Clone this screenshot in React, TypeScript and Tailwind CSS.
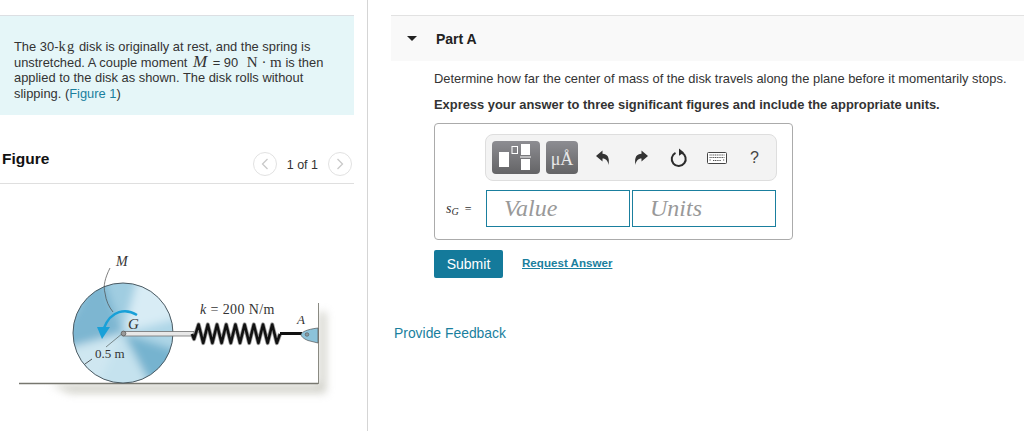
const sans = { fontFamily: '"Liberation Sans", Arial, sans-serif' };
const serif = { fontFamily: '"Liberation Serif", serif' };

function springPath() {
  // coil teeth between x=182 and x=270
  let d = "M182 94 L184 99";
  const n = 9;
  for (let i = 0; i < n; i++) {
    const x = 184 + i * 9.2;
    d += ` L${x + 4.6} 84.5 L${x + 9.2} 103`;
  }
  d += " L270 94";
  return d;
}

function DiskFigure() {
  const cx = 113;
  const cy = 93;
  const r = 50;
  // light and dark wedges of the brushed metal look
  const wedges: [number, number, string][] = [
    [-75, -15, "#d8ecf5"],
    [-15, 18, "#aed6e7"],
    [18, 62, "#76b3cf"],
    [62, 115, "#c5e2ee"],
    [115, 165, "#cfe7f1"],
    [165, 250, "#7db6d1"],
    [250, 285, "#a0cde1"],
  ];
  const pt = (a: number, l = 70) => {
    const t = (a * Math.PI) / 180;
    return `${cx + l * Math.cos(t)} ${cy + l * Math.sin(t)}`;
  };
  const spring = springPath();
  return (
    <svg width="344" height="170" viewBox="0 0 344 170" className="block ml-[10px]">
      <defs>
        <clipPath id="disk">
          <circle cx={cx} cy={cy} r={r} />
        </clipPath>
        <filter id="soft" x="-20%" y="-20%" width="140%" height="140%">
          <feGaussianBlur stdDeviation="4" />
        </filter>
        <filter id="shadow" x="-20%" y="-50%" width="140%" height="200%">
          <feGaussianBlur stdDeviation="4" />
        </filter>
      </defs>

      {/* shadow under the plane */}
      <path d="M40 144 L309 144 L309 72 L316 72 L316 153 L60 153 Z" fill="#a3a393" opacity="0.5" filter="url(#shadow)" />
      <rect x="9" y="63" width="299" height="80" fill="#fff" />

      {/* plane and wall */}
      <path d="M9 143.5 H308" fill="none" stroke="#77776f" strokeWidth="1.4" />
      <path d="M308.5 144 V63" fill="none" stroke="#8a8a82" strokeWidth="1" />

      {/* disk */}
      <g clipPath="url(#disk)">
        <rect x={cx - r} y={cy - r} width={r * 2} height={r * 2} fill="#a3cfe2" />
        <g filter="url(#soft)">
          {wedges.map(([a, b, c], i) => (
            <path key={i} d={`M${cx} ${cy} L${pt(a)} L${pt(b)} Z`} fill={c} />
          ))}
        </g>
      </g>
      <circle cx={cx} cy={cy} r={r} fill="none" stroke="#4c5a62" strokeWidth="1" />

      {/* moment leader and arrow */}
      <path d="M100 28 C95 38 93 46 95 53 C96 61 99 67 103 72" fill="none" stroke="#4a4a4a" strokeWidth="0.7" />
      <path d="M127 75 C116 68 101 70 94 88" fill="none" stroke="#18a0d8" strokeWidth="2.4" />
      <path d="M87 87 L100 87 L92 99 Z" fill="#18a0d8" />

      {/* radius lines */}
      <path d="M113 93 L96 107" stroke="#55605f" strokeWidth="0.7" />
      <path d="M82 119 L75 124" stroke="#333" strokeWidth="0.8" />

      {/* rod */}
      <rect x="113" y="91.5" width="71" height="4.5" fill="#e8e8e8" stroke="#707070" strokeWidth="0.8" />
      <circle cx="113.5" cy="93.5" r="2.4" fill="#999" stroke="#555" strokeWidth="0.7" />

      {/* spring */}
      <path d={spring} fill="none" stroke="#a0a0a0" strokeWidth="4.2" strokeLinejoin="round" />
      <path d={spring} fill="none" stroke="#111" strokeWidth="2.6" strokeLinejoin="round" />
      <rect x="270" y="92" width="22" height="3" fill="#111" />

      {/* pin at A */}
      <path d="M308 88 L308 103 L298 100.5 C293 98.5 291 96 291 94.5 C292 92 296 89.5 308 88 Z" fill="#8cc3da" stroke="#555" strokeWidth="0.7" />
      <circle cx="297" cy="94.5" r="1.8" fill="#8a9aa0" stroke="#555" strokeWidth="0.6" />

      <g style={serif} fill="#333">
        <text x="106" y="26" fontSize="14" fontStyle="italic">M</text>
        <text x="118" y="89" fontSize="15" fontStyle="italic">G</text>
        <text x="85" y="118" fontSize="13">0.5 m</text>
        <text x="190" y="74" fontSize="14" letterSpacing="0.4"><tspan fontStyle="italic">k</tspan> = 200 N/m</text>
        <text x="287" y="84" fontSize="13" fontStyle="italic">A</text>
      </g>
    </svg>
  );
}

function Toolbar() {
  return (
    <div className="flex items-center w-[292px] h-[47px] ml-[50px] mt-[10px] rounded-[8px] border border-[#dedede] bg-[#f3f3f3] pl-[6px]">
      <div className="w-[48px] h-[33px] rounded-[4px] bg-gradient-to-b from-[#8d8d92] to-[#646466]">
        <svg width="48" height="33" viewBox="0 0 48 33">
          <rect x="7" y="11" width="10" height="15" fill="#fff" />
          <rect x="20" y="5.5" width="5.5" height="7" fill="none" stroke="#fff" strokeWidth="1" />
          <rect x="29" y="3" width="9" height="11" fill="#fff" />
          <rect x="28" y="15.5" width="11" height="1" fill="#fff" />
          <rect x="29" y="18" width="9" height="11" fill="#fff" />
        </svg>
      </div>
      <div className="w-[32px] h-[33px] ml-[6px] rounded-[4px] bg-gradient-to-b from-[#8d8d92] to-[#646466] flex items-end justify-center pb-[6px] text-[#e8e8e8] text-[18px] leading-none" style={serif}>
        μÅ
      </div>
      <svg width="16" height="16" viewBox="0 0 16 16" className="ml-[17px]">
        <path d="M1 6 L7.5 0.5 L7.5 3.8 C12 3.8 15 7 13.5 15 C13 11 11 8.5 7.5 8.5 L7.5 11.5 Z" fill="#333" />
      </svg>
      <svg width="16" height="16" viewBox="0 0 16 16" className="ml-[22px]">
        <path d="M15 6 L8.5 0.5 L8.5 3.8 C4 3.8 1 7 2.5 15 C3 11 5 8.5 8.5 8.5 L8.5 11.5 Z" fill="#333" />
      </svg>
      <svg width="18" height="20" viewBox="0 0 18 20" className="ml-[21px]">
        <path d="M11.5 4.6 A7 7 0 1 1 5.5 4.8" fill="none" stroke="#2b2b2b" strokeWidth="2" />
        <path d="M9 0.5 L14 4.5 L9 7.8 Z" fill="#2b2b2b" />
      </svg>
      <svg width="20" height="12" viewBox="0 0 20 12" className="ml-[19px]">
        <rect x="0.5" y="0.5" width="19" height="11" rx="1" fill="#fff" stroke="#444" />
        <path d="M2.5 3 H17.5 M2.5 5.5 H17.5 M2.5 8 H4 M6 8.5 H14 M16 8 H17.5" stroke="#555" strokeWidth="1.2" strokeDasharray="1.2 0.6" />
      </svg>
      <span className="ml-[23px] text-[16px] leading-none text-[#444]" style={sans}>?</span>
    </div>
  );
}

export default function App() {
  return (
    <div className="flex w-[1024px] h-[431px] overflow-hidden bg-white text-[#333]" style={sans}>
      <div className="w-[368px] h-full shrink-0 border-r border-[#d5d5d5] pt-[15px]">
        <div className="w-[354px] h-[100px] bg-[#e5f6f8] border-t border-[#dcdfe3] pl-[14px] pt-[23px] text-[12.9px] leading-[15.7px] whitespace-nowrap">
          <p>The 30-<span className="text-[14.5px] leading-[0] tracking-[1.2px]" style={serif}>kg</span> disk is originally at rest, and the spring is</p>
          <p>unstretched. A couple moment <i className="ml-[2px] text-[17px] leading-[0]" style={serif}>M</i><span className="ml-[2px]"> = 90</span> <span className="ml-[5px] text-[15px] leading-[0]" style={serif}>N · m</span> is then</p>
          <p>applied to the disk as shown. The disk rolls without</p>
          <p>slipping. (<a className="text-[#1a7f9e]">Figure 1</a>)</p>
        </div>
        <div className="w-[354px] h-[69px] border-b border-[#dfdfdf] flex items-end pb-[7px] pl-[2px]">
          <h2 className="self-start mt-[35px] text-[15.5px] leading-[18px] font-bold text-[#111]">Figure</h2>
          <div className="ml-auto flex items-center pr-[2px]">
            <span className="flex items-center justify-center w-[24px] h-[24px] rounded-full border border-[#e2e2e2] text-[#c9c9c9]">
              <svg width="8" height="12" viewBox="0 0 8 12"><path d="M6.5 1 L1.5 6 L6.5 11" fill="none" stroke="currentColor" strokeWidth="1.3" /></svg>
            </span>
            <span className="mx-[10px] mt-[2px] text-[12.5px] leading-none text-[#333]">1 of 1</span>
            <span className="flex items-center justify-center w-[24px] h-[24px] rounded-full border border-[#e2e2e2] text-[#c9c9c9]">
              <svg width="8" height="12" viewBox="0 0 8 12"><path d="M1.5 1 L6.5 6 L1.5 11" fill="none" stroke="currentColor" strokeWidth="1.3" /></svg>
            </span>
          </div>
        </div>
        <div className="mt-[56px]">
          <DiskFigure />
        </div>
      </div>

      <div className="flex-1 pt-[15px] pl-[23px]">
        <div className="h-[46px] bg-[#f9f9f9] border-t border-[#e2e2e2] flex items-center pl-[16px]">
          <span className="w-0 h-0 border-l-[5px] border-r-[5px] border-t-[5px] border-l-transparent border-r-transparent border-t-[#222]" />
          <span className="ml-[19px] text-[14px] leading-none font-bold text-[#222]">Part A</span>
        </div>
        <div className="pl-[43px]">
          <p className="mt-[10px] text-[12.9px] leading-[16px] whitespace-nowrap">Determine how far the center of mass of the disk travels along the plane before it momentarily stops.</p>
          <p className="mt-[10px] text-[12.9px] leading-[16px] font-bold whitespace-nowrap">Express your answer to three significant figures and include the appropriate units.</p>
          <div className="mt-[10px] w-[359px] h-[117px] rounded-[4px] border border-[#ababab]">
            <Toolbar />
            <div className="flex items-center mt-[9px] ml-[11px]">
              <span className="w-[40px] text-[14px] text-[#333] whitespace-nowrap" style={serif}>
                <i>s</i><i className="text-[10px] relative top-[2px]">G</i><span className="ml-[6px] text-[12px]">=</span>
              </span>
              <div className="w-[144px] h-[37px] border border-[#1a7f9e] pl-[17px] pb-[2px] flex items-center text-[24px] italic text-[#999]" style={serif}>Value</div>
              <div className="w-[144px] h-[37px] ml-[2px] border border-[#1a7f9e] pl-[17px] pb-[2px] flex items-center text-[24px] italic text-[#999]" style={serif}>Units</div>
            </div>
          </div>
          <div className="flex items-center mt-[10px]">
            <button className="w-[69px] h-[28px] rounded-[2px] bg-[#147a9b] text-white text-[14px] font-medium">Submit</button>
            <a className="ml-[19px] mt-[-2px] text-[11.6px] font-bold text-[#1a7f9e] underline">Request Answer</a>
          </div>
        </div>
        <a className="block mt-[46px] pl-[3px] text-[13.9px] leading-[18px] text-[#1a7f9e]">Provide Feedback</a>
      </div>
    </div>
  );
}
